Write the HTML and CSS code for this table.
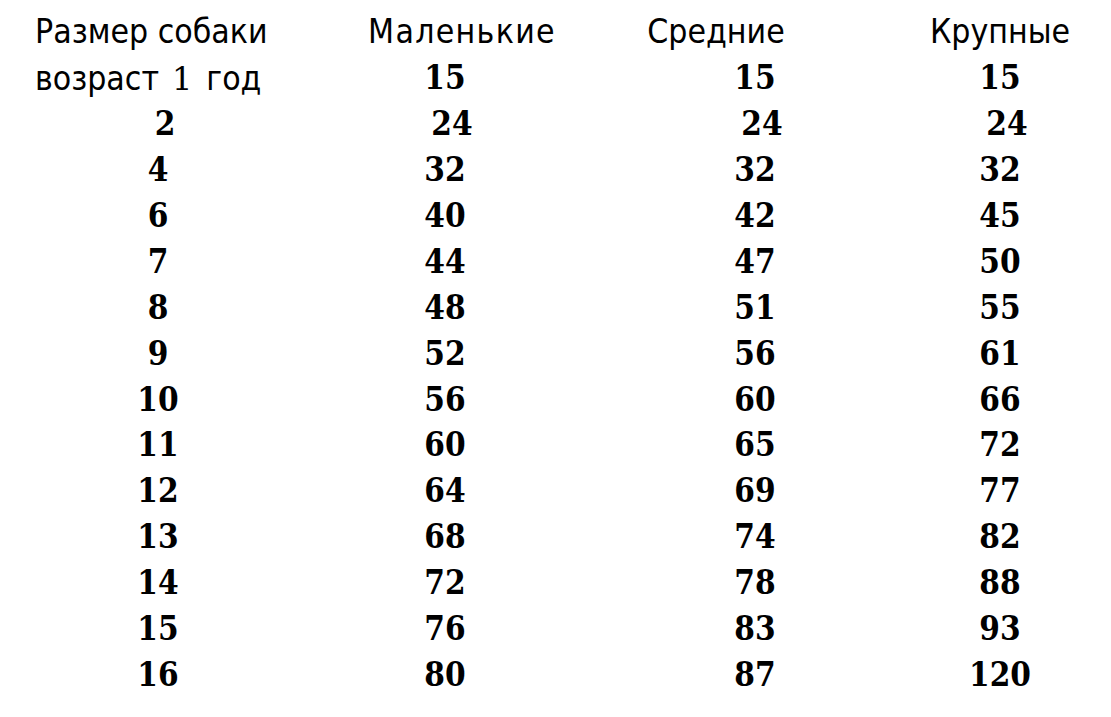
FILE: index.html
```html
<!DOCTYPE html>
<html lang="ru">
<head>
<meta charset="utf-8">
<title>Возраст собак</title>
<link rel="stylesheet" href="styles.css">
</head>
<body>
<div class="table">
  <div class="cell head first">Размер собаки</div>
  <div class="cell head small">Маленькие</div>
  <div class="cell head medium">Средние</div>
  <div class="cell head large">Крупные</div>

  <div class="cell head first age">возраст<span class="one">1</span>год</div>
  <div class="cell num">15</div>
  <div class="cell num">15</div>
  <div class="cell num">15</div>

  <div class="cell num shift">2</div><div class="cell num shift">24</div><div class="cell num shift">24</div><div class="cell num shift">24</div>
  <div class="cell num">4</div><div class="cell num">32</div><div class="cell num">32</div><div class="cell num">32</div>
  <div class="cell num">6</div><div class="cell num">40</div><div class="cell num">42</div><div class="cell num">45</div>
  <div class="cell num">7</div><div class="cell num">44</div><div class="cell num">47</div><div class="cell num">50</div>
  <div class="cell num">8</div><div class="cell num">48</div><div class="cell num">51</div><div class="cell num">55</div>
  <div class="cell num">9</div><div class="cell num">52</div><div class="cell num">56</div><div class="cell num">61</div>
  <div class="cell num">10</div><div class="cell num">56</div><div class="cell num">60</div><div class="cell num">66</div>
  <div class="cell num">11</div><div class="cell num">60</div><div class="cell num">65</div><div class="cell num">72</div>
  <div class="cell num">12</div><div class="cell num">64</div><div class="cell num">69</div><div class="cell num">77</div>
  <div class="cell num">13</div><div class="cell num">68</div><div class="cell num">74</div><div class="cell num">82</div>
  <div class="cell num">14</div><div class="cell num">72</div><div class="cell num">78</div><div class="cell num">88</div>
  <div class="cell num">15</div><div class="cell num">76</div><div class="cell num">83</div><div class="cell num">93</div>
  <div class="cell num">16</div><div class="cell num">80</div><div class="cell num">87</div><div class="cell num">120</div>
</div>
</body>
</html>
```

FILE: styles.css
```css
html, body {
  margin: 0;
  padding: 0;
  background: #ffffff;
  color: #000000;
}

.table {
  display: grid;
  grid-template-columns: 246px 328px 292px 198px;
  grid-auto-rows: 45.9px;
  padding: 9px 0 0 35px;
}

.cell {
  display: flex;
  align-items: center;
  justify-content: center;
  white-space: nowrap;
}

.head {
  font-family: "DejaVu Sans Condensed", "DejaVu Sans", sans-serif;
  font-size: 33.5px;
}

.head.first {
  justify-content: flex-start;
}

.head.age {
  align-items: baseline;
  padding-top: 4px;
}

.head.small {
  padding-left: 34px;
  letter-spacing: 1.3px;
}

.head.medium {
  padding-right: 78px;
}

.one {
  font-family: "DejaVu Serif", serif;
  font-size: 32px;
  font-weight: normal;
  margin: 0 14px 0 13px;
}

.num {
  font-family: "DejaVu Serif Condensed", "DejaVu Serif", serif;
  font-weight: bold;
  font-size: 33px;
}

.num.shift {
  padding-left: 14px;
}
```
